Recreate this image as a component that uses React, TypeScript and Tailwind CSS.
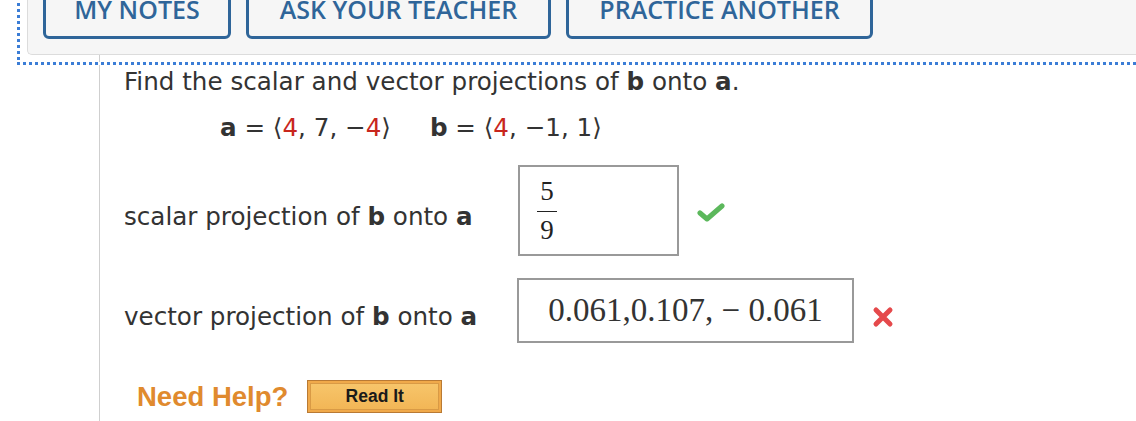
import React from "react";

const sans = "font-['DejaVu_Sans','Verdana',sans-serif]";
const serif = "font-['Liberation_Serif','DejaVu_Serif',serif]";

function ActionButton({ label, width }: { label: string; width: string }) {
  return (
    <button
      className={`${width} h-[62px] rounded-[6px] border-[3px] border-[#2f6599] bg-[#f6f6f6] pt-[2px] font-['Open_Sans',sans-serif] text-[25px] font-semibold uppercase leading-none text-[#2f6599]`}
    >
      {label}
    </button>
  );
}

function CheckMark() {
  return (
    <svg width="28" height="22" viewBox="0 0 28 22" aria-hidden="true">
      <path
        d="M3 12 L10 18 L25 5"
        fill="none"
        stroke="#5cb85c"
        strokeWidth="5"
        strokeLinecap="round"
        strokeLinejoin="round"
      />
    </svg>
  );
}

function CrossMark() {
  return (
    <svg width="22" height="22" viewBox="0 0 22 22" aria-hidden="true">
      <path
        d="M4 4 L18 18 M18 4 L4 18"
        fill="none"
        stroke="#e5494b"
        strokeWidth="5"
        strokeLinecap="round"
      />
    </svg>
  );
}

export default function App() {
  return (
    <div className="h-[421px] w-[1136px] overflow-hidden bg-white text-[#333]">
      <div className="-mt-[38px] ml-[17px] border-b-[3px] border-l-[3px] border-dotted border-[#3b7dd6]">
        <div className="ml-[7px] rounded-bl-[5px] border-b border-l border-[#dcdcdc] bg-[#f6f6f6] pb-[15px] pl-[15px] pt-[15px]">
          <div className="flex gap-[15px]">
            <ActionButton label="My Notes" width="w-[188px]" />
            <ActionButton label="Ask Your Teacher" width="w-[305px]" />
            <ActionButton label="Practice Another" width="w-[307px]" />
          </div>
        </div>
        <div className="ml-[79px] h-[7px] border-l border-[#cfcfcf]" />
      </div>

      <div className={`ml-[99px] h-[400px] border-l border-[#cfcfcf] pl-[24px] ${sans} text-[24.6px]`}>
        <p className="pt-[4px] leading-[26px]">
          Find the scalar and vector projections of <b>b</b> onto <b>a</b>.
        </p>

        <p className="mt-[20px] pl-[96px] leading-[26px]">
          <b>a</b> = ⟨<span className="text-[#c8261d]">4</span>, 7, −
          <span className="text-[#c8261d]">4</span>⟩
          <span className="inline-block w-[39px]" />
          <b>b</b> = ⟨<span className="text-[#c8261d]">4</span>, −1, 1⟩
        </p>

        <div className="mt-[24px] flex items-center">
          <div className="w-[394px] pt-[12px] leading-[26px]">
            scalar projection of <b>b</b> onto <b>a</b>
          </div>
          <div className="flex h-[91px] w-[161px] items-center border-2 border-[#999] pl-[17px]">
            <div className={`inline-flex flex-col items-center ${serif} text-[27px] leading-none text-[#222]`}>
              <span className="px-[1px] pb-[6px]">5</span>
              <span className="h-[1px] w-[20px] bg-[#222]" />
              <span className="pt-[5px]">9</span>
            </div>
          </div>
          <div className="ml-[18px] pt-[2px]">
            <CheckMark />
          </div>
        </div>

        <div className="mt-[22px] flex items-center">
          <div className="w-[393px] pt-[12px] leading-[26px]">
            vector projection of <b>b</b> onto <b>a</b>
          </div>
          <div className={`flex h-[65px] w-[337px] items-center justify-center border-2 border-[#999] ${serif} text-[33px] text-[#333]`}>
            0.061,0.107, − 0.061
          </div>
          <div className="ml-[18px] pt-[12px]">
            <CrossMark />
          </div>
        </div>

        <div className="mt-[37px] flex items-center pl-[13px]">
          <span className="font-['Liberation_Sans',Arial,sans-serif] text-[27.5px] font-bold leading-none text-[#e08a2e]">
            Need Help?
          </span>
          <button className="ml-[19px] h-[33px] w-[135px] border border-[#b97a34] bg-[#f0a94a] p-[2px]">
            <span className="flex h-full w-full items-center justify-center border border-[#d99a45] bg-gradient-to-b from-[#f7c56a] to-[#f2b656] font-['Liberation_Sans',Arial,sans-serif] text-[17.5px] font-bold text-[#1a1a1a]">
              Read It
            </span>
          </button>
        </div>
      </div>
    </div>
  );
}
